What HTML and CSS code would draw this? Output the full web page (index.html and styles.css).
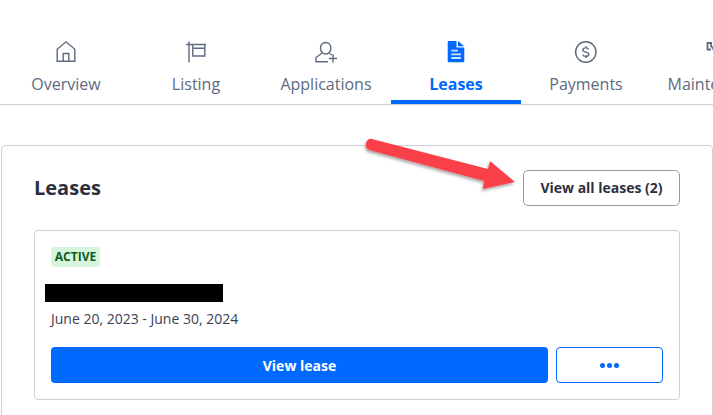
FILE: index.html
```html
<!DOCTYPE html>
<html>
<head>
  <link rel="stylesheet" href="styles.css">
</head>
<body>
  <nav class="tabs">
    <a class="tab">
      <svg class="tab-icon" viewBox="0 0 24 24"><path d="M3.200 21.200V9.300L12 1.800l8.800 7.500v11.900z M9.200 21.200v-7.700h5.600v7.700"/></svg>
      <span>Overview</span>
    </a>
    <a class="tab">
      <svg class="tab-icon" viewBox="0 0 24 24"><path d="M5 1.500v21 M2 4.500h20 M8.800 4.500v11.500h12v-11.500 M8.800 8.200h12"/></svg>
      <span>Listing</span>
    </a>
    <a class="tab">
      <svg class="tab-icon" viewBox="0 0 24 24"><path d="M11.700 2.500c3 0 5.200 2.300 5.200 5.500s-2.200 6-5.200 6-5.200-2.800-5.200-6 2.200-5.500 5.200-5.500z M7.800 13.200l-5.800 4.300v4.300h12 M15.500 13.500l2.500 1.500 M15 18.500h8 M19 14.500v8"/></svg>
      <span>Applications</span>
    </a>
    <a class="tab active">
      <svg class="tab-icon" viewBox="0 0 24 24"><path class="doc-fill" d="M4.700 1h7.800v6.500h7.800v13.700a1 1 0 0 1-1 1H4.700a1 1 0 0 1-1-1V2a1 1 0 0 1 1-1z M14 1l6.300 5.200H14z"/><path class="doc-lines" d="M7.300 10.700h6.500 M7.300 14.300h9.700 M7.300 18h9.700"/></svg>
      <span>Leases</span>
    </a>
    <a class="tab">
      <svg class="tab-icon" viewBox="0 0 24 24"><circle cx="11.800" cy="12" r="10.200"/><path d="M14.700 9.500c-.3-1-1.400-1.600-2.900-1.600-1.700 0-3 .8-3 2.100 0 2.900 6 1.400 6 4.200 0 1.300-1.300 2.100-3 2.100-1.500 0-2.700-.6-3-1.700 M11.800 6.200v1.700 M11.800 16.300v1.700"/></svg>
      <span>Payments</span>
    </a>
    <a class="tab">
      <svg class="tab-icon tab-icon-heavy" viewBox="0 0 24 24"><path d="M8 3H3.500v6.500H7 M7 3v3l3 3.500 M9 9.500l3 3"/></svg>
      <span>Maintenance</span>
    </a>
  </nav>

  <main class="content">
    <section class="card">
      <div class="card-header">
        <h2 class="card-title">Leases</h2>
        <button class="btn-outline">View all leases (2)</button>
      </div>
      <div class="lease">
        <span class="badge">ACTIVE</span>
        <div class="redacted"></div>
        <p class="lease-dates">June 20, 2023 - June 30, 2024</p>
        <div class="lease-actions">
          <button class="btn-primary">View lease</button>
          <button class="btn-more" aria-label="More">
            <span class="dot"></span><span class="dot"></span><span class="dot"></span>
          </button>
        </div>
      </div>
    </section>
  </main>

  <!-- annotation drawn on top of the screenshot -->
  <svg class="arrow" width="713" height="415" viewBox="0 0 713 415">
    <defs>
      <filter id="arrow-shadow" x="-10%" y="-20%" width="120%" height="150%">
        <feDropShadow dx="-1" dy="2" stdDeviation="1.500" flood-color="#000" flood-opacity="0.35"/>
      </filter>
    </defs>
    <path class="arrow-shape" filter="url(#arrow-shadow)" d="M372 139L488 169L490 161L515 182L483 189L484 181L369 150Q365 148 366 143Q368 138 372 139z"/>
  </svg>
</body>
</html>
```

FILE: styles.css
```css
body {
  margin: 0;
  height: 415px;
  overflow: hidden;
  background: #fff;
  font-family: "Open Sans", Arial, sans-serif;
  color: #2b3040;
}
.tabs {
  display: flex;
  height: 104px;
  padding-left: 1px;
  border-bottom: 1px solid #cfd1d4;
  overflow: hidden;
}
.tab {
  flex: 0 0 130px;
  box-sizing: border-box;
  height: 104px;
  padding-top: 40px;
  display: flex;
  flex-direction: column;
  align-items: center;
  font-size: 16px;
  line-height: 22px;
  color: #5c6b80;
  white-space: nowrap;
}
.tab-icon {
  width: 24px;
  height: 24px;
  margin-bottom: 9px;
  fill: none;
  stroke: #5c6b80;
  stroke-width: 1.400;
}
.tab-icon-heavy {
  stroke-width: 1.800;
}
.tab.active {
  color: #0069ff;
  font-weight: 700;
  border-bottom: 4px solid #0069ff;
  border-radius: 3px 3px 0 0;
}
.doc-fill {
  fill: #0069ff;
  stroke: none;
}
.doc-lines {
  stroke: #cfe1ff;
  stroke-width: 1.800;
}
.content {
  padding: 40px 0 0 1px;
}
.card {
  width: 712px;
  box-sizing: border-box;
  border: 1px solid #cfd1d4;
  border-radius: 4px;
  padding: 24px 32px;
}
.card-header {
  display: flex;
  justify-content: space-between;
  align-items: center;
  margin-bottom: 24px;
}
.card-title {
  margin: 0 0 2px;
  font-size: 20px;
  font-weight: 700;
}
.btn-outline {
  width: 157px;
  height: 36px;
  padding: 0 0 2px;
  background: #fff;
  border: 1px solid #9a9b9e;
  border-radius: 5px;
  font-family: inherit;
  font-size: 14px;
  font-weight: 700;
  color: #2b3040;
}
.lease {
  border: 1px solid #cfd1d4;
  border-radius: 4px;
  padding: 16px;
}
.badge {
  display: block;
  width: 49px;
  height: 20px;
  background: #d6f5dc;
  border-radius: 3px;
  font-size: 12px;
  font-weight: 700;
  line-height: 20px;
  text-align: center;
  color: #0b5c24;
}
.redacted {
  width: 178px;
  height: 18px;
  margin: 17px 0 0 -6px;
  background: #000;
}
.lease-dates {
  margin: 7px 0 18px;
  font-size: 14px;
  line-height: 20px;
  color: #3b3f50;
}
.lease-actions {
  display: flex;
  gap: 8px;
}
.btn-primary {
  flex: 1;
  height: 36px;
  background: #0069ff;
  border: none;
  border-radius: 4px;
  font-family: inherit;
  font-size: 14px;
  font-weight: 700;
  color: #fff;
}
.btn-more {
  width: 107px;
  height: 36px;
  display: flex;
  align-items: center;
  justify-content: center;
  gap: 2px;
  background: #fff;
  border: 1px solid #0069ff;
  border-radius: 4px;
}
.dot {
  width: 5px;
  height: 5px;
  background: #0069ff;
  border-radius: 50%;
}
.arrow {
  position: absolute;
  top: 0;
  left: 0;
  pointer-events: none;
}
.arrow-shape {
  fill: #f9414a;
}
```
